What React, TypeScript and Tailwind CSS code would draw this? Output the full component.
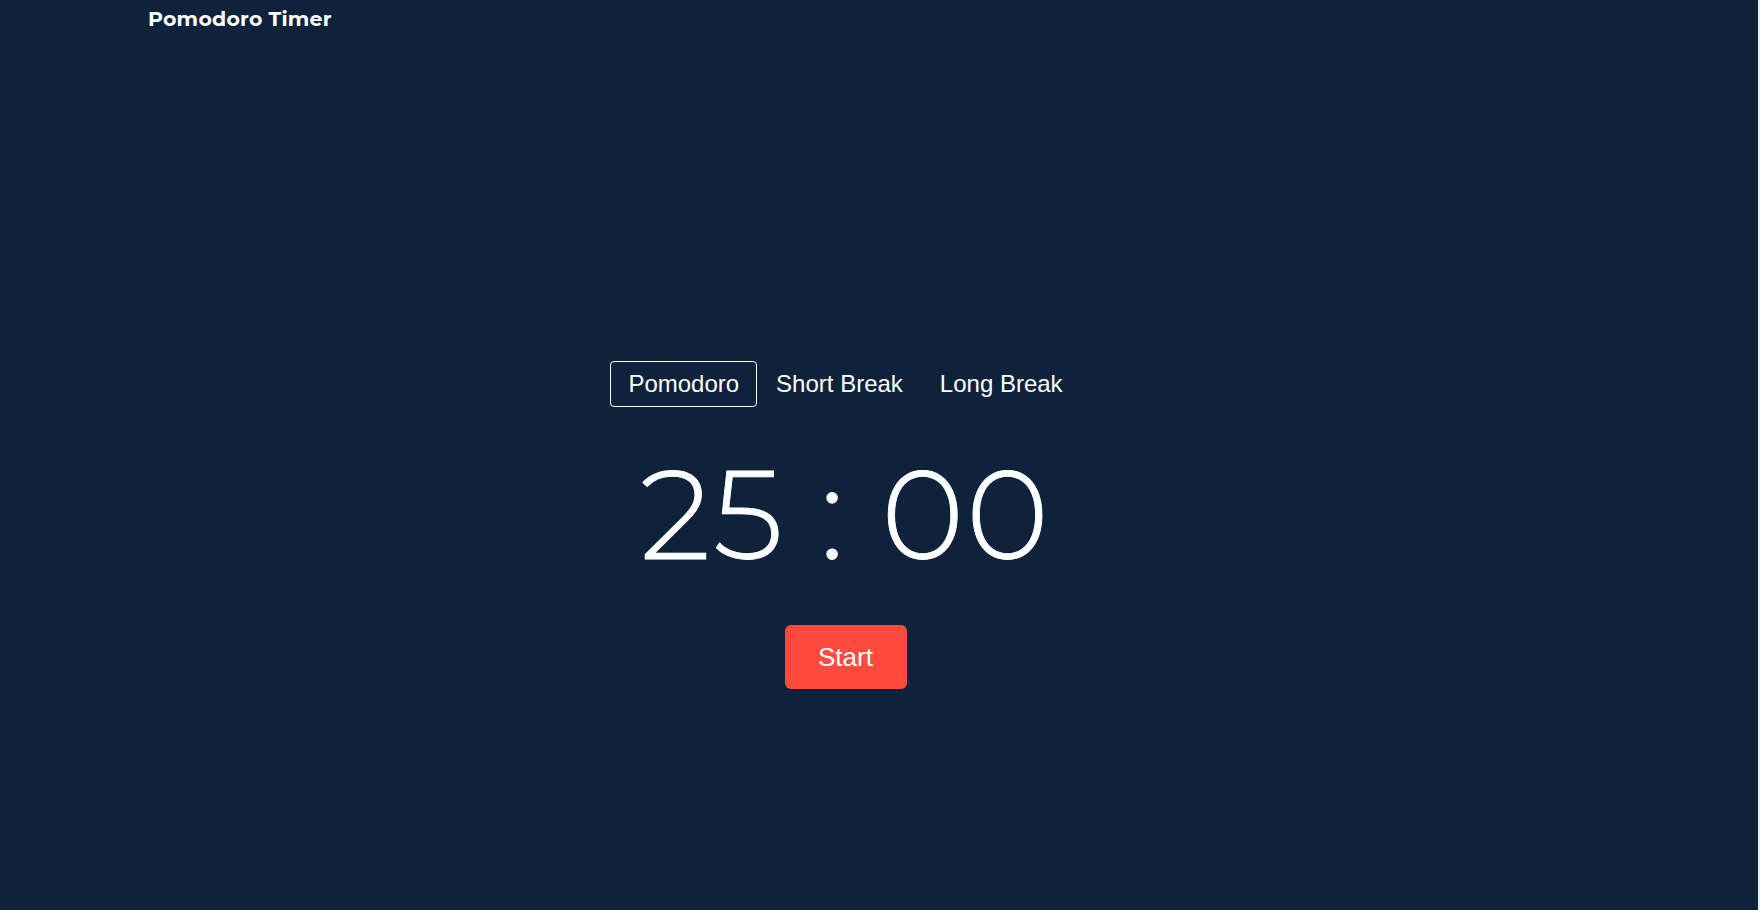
import { useState } from "react";

const texts = {
  appTitle: "Pomodoro Timer",
  start: "Start",
};

const modes = [
  { key: "pomodoro", label: "Pomodoro", minutes: 25 },
  { key: "short", label: "Short Break", minutes: 5 },
  { key: "long", label: "Long Break", minutes: 15 },
];

export default function App() {
  const [mode, setMode] = useState("pomodoro");
  const current = modes.find((m) => m.key === mode) ?? modes[0];
  const mm = String(current.minutes).padStart(2, "0");

  return (
    <div className="flex min-h-screen bg-[#ececec]">
      <main className="flex-1 bg-[#0e223c] text-white flex flex-col">
        <header className="pl-[148px] pt-[7px]">
          <h1 className="font-['Montserrat','Inter',sans-serif] font-bold text-[20.5px] leading-[24px] tracking-[0.2px]">
            {texts.appTitle}
          </h1>
        </header>
        <section className="flex flex-col items-center pr-[67px] pt-[330px]">
          <nav className="flex flex-row items-center gap-[1px] font-['Liberation_Sans',Arial,sans-serif]">
            {modes.map((m) => (
              <button
                key={m.key}
                onClick={() => setMode(m.key)}
                className={
                  m.key === mode
                    ? "h-[46px] px-[17px] text-[24px] leading-none rounded-[4px] border border-white text-white"
                    : "h-[46px] px-[17px] text-[24px] leading-none rounded-[4px] border border-transparent text-white"
                }
              >
                {m.label}
              </button>
            ))}
          </nav>
          <div className="mt-[32px] font-['Montserrat','Inter',sans-serif] font-light text-[126px] leading-[150px] tracking-[2px] [-webkit-text-stroke:0.8px_white]">
            {mm} : 00
          </div>
          <button className="mt-[36px] w-[122px] h-[64px] rounded-[6px] bg-[#ff4a3d] text-white text-[26px] font-['Liberation_Sans',Arial,sans-serif]">
            {texts.start}
          </button>
        </section>
      </main>
      <div className="w-[2px] bg-[#ececec]" />
    </div>
  );
}
